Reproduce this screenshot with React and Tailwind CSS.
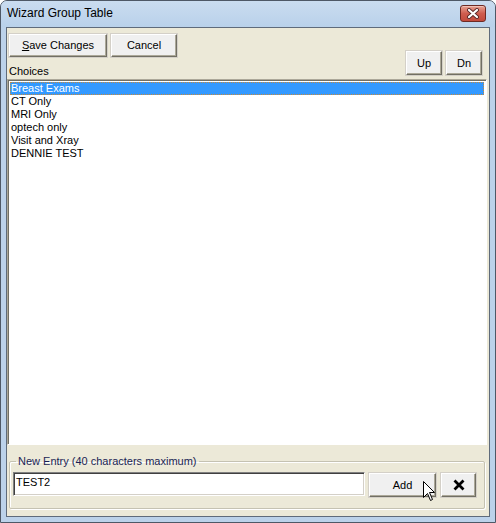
import React from "react";

const font = { fontFamily: '"Liberation Sans", Arial, sans-serif' };

function Btn({ className = "", children }) {
  return (
    <div
      className={
        "flex items-center justify-center bg-[#f0f0f0] border border-t-[#ffffff] border-l-[#ffffff] border-b-[#716f64] border-r-[#716f64] shadow-[inset_-1px_-1px_0_#aca899,0_0_0_1px_#d4d0c8] text-[11px] leading-[13px] text-black " +
        className
      }
    >
      {children}
    </div>
  );
}

const items = [
  "Breast Exams",
  "CT Only",
  "MRI Only",
  "optech only",
  "Visit and Xray",
  "DENNIE TEST",
];

export default function App() {
  return (
    <div
      className="w-[496px] h-[523px] flex flex-col rounded-t-[7px] border border-[#4e5866] bg-[#bcd2ea] overflow-hidden"
      style={font}
    >
      {/* title bar */}
      <div className="h-[26px] flex items-start justify-between bg-gradient-to-b from-[#cadcf0] to-[#b9d1ea] flex-none">
        <div className="pl-[6px] pt-[5px] text-[12px] leading-[15px] text-black">
          Wizard Group Table
        </div>
        <div className="mt-[4px] mr-[9px] w-[26px] h-[17px] rounded-[3px] border border-[#6e2a24] bg-gradient-to-b from-[#e6a193] via-[#cf5d4f] to-[#c24a3c] flex items-center justify-center shadow-[inset_0_1px_0_#f0c0b6]">
          <svg width="14" height="11" viewBox="0 0 14 11">
            <path d="M3 2 L11 9 M11 2 L3 9" stroke="#5a2a2a" strokeWidth="4" strokeLinecap="round" />
            <path d="M3 2 L11 9 M11 2 L3 9" stroke="#ffffff" strokeWidth="2.2" strokeLinecap="round" />
          </svg>
        </div>
      </div>

      {/* client area */}
      <div className="flex-1 mx-[5px] mb-[5px] border border-[#5f6b7b] bg-[#ece9d8] flex flex-col">
        <div className="flex justify-between items-end mb-[1px]">
          <div className="flex flex-col pl-[2px] pt-[6px]">
            <div className="flex gap-[4px]">
              <Btn className="w-[98px] h-[23px]">
                <span>
                  <span className="underline">S</span>ave Changes
                </span>
              </Btn>
              <Btn className="w-[66px] h-[23px]">Cancel</Btn>
            </div>
            <div className="mt-[8px] h-[13px] text-[11px] leading-[13px] text-black">Choices</div>
          </div>
          <div className="flex gap-[4px] mr-[7px] mb-[3px]">
            <Btn className="w-[36px] h-[24px]">Up</Btn>
            <Btn className="w-[36px] h-[24px]">Dn</Btn>
          </div>
        </div>

        {/* listbox */}
        <div className="h-[366px] mr-[2px] bg-white border border-t-[#aca899] border-l-[#aca899] border-b-white border-r-white shadow-[inset_1px_1px_0_#716f64] pt-[2px] pl-[2px] pr-[2px] flex-none">
          {items.map((t, i) =>
            i === 0 ? (
              <div
                key={t}
                className="h-[13px] bg-[#3399ff] border border-dotted border-[#c88a3a] text-white text-[11px] leading-[11px] pl-0"
              >
                {t}
              </div>
            ) : (
              <div key={t} className="h-[13px] text-black text-[11px] leading-[13px] pl-[1px]">
                {t}
              </div>
            )
          )}
        </div>

        {/* group box */}
        <fieldset className="mt-[10px] ml-[2px] mr-[4px] border border-[#c5c2b2] shadow-[inset_1px_1px_0_#ffffff,1px_1px_0_#ffffff] rounded-[2px] pl-[3px] pr-[7px] pb-[11px]">
          <legend className="ml-[3px] px-[2px] text-[11px] leading-[13px] text-[#1a1f55]">
            New Entry (40 characters maximum)
          </legend>
          <div className="flex items-start mt-[4px]">
            <div className="w-[352px] h-[24px] bg-white border border-t-[#808080] border-l-[#808080] border-b-[#ffffff] border-r-[#ffffff] shadow-[inset_1px_1px_0_#404040,inset_-1px_-1px_0_#d4d0c8] pl-[2px] pt-[3px] text-[11px] leading-[13px] text-black">
              TEST2
            </div>
            <div className="relative ml-[4px] mt-[1px]">
              <Btn className="w-[67px] h-[24px]">Add</Btn>
              <svg
                className="absolute left-[54px] top-[8px]"
                width="13"
                height="21"
                viewBox="0 0 13 21"
              >
                <path
                  d="M0.5 0.5 L0.5 16.5 L4.5 12.5 L7.5 19.5 L9.5 18.5 L6.5 11.5 L11.5 11.5 Z"
                  fill="#ffffff"
                  stroke="#000000"
                  strokeWidth="1"
                />
              </svg>
            </div>
            <Btn className="ml-[5px] mt-[1px] w-[35px] h-[24px]">
              <svg width="14" height="12" viewBox="0 0 14 12">
                <path d="M2.5 1.5 L11.5 10.5 M11.5 1.5 L2.5 10.5" stroke="#000" strokeWidth="2.8" />
              </svg>
            </Btn>
          </div>
        </fieldset>
      </div>
    </div>
  );
}
